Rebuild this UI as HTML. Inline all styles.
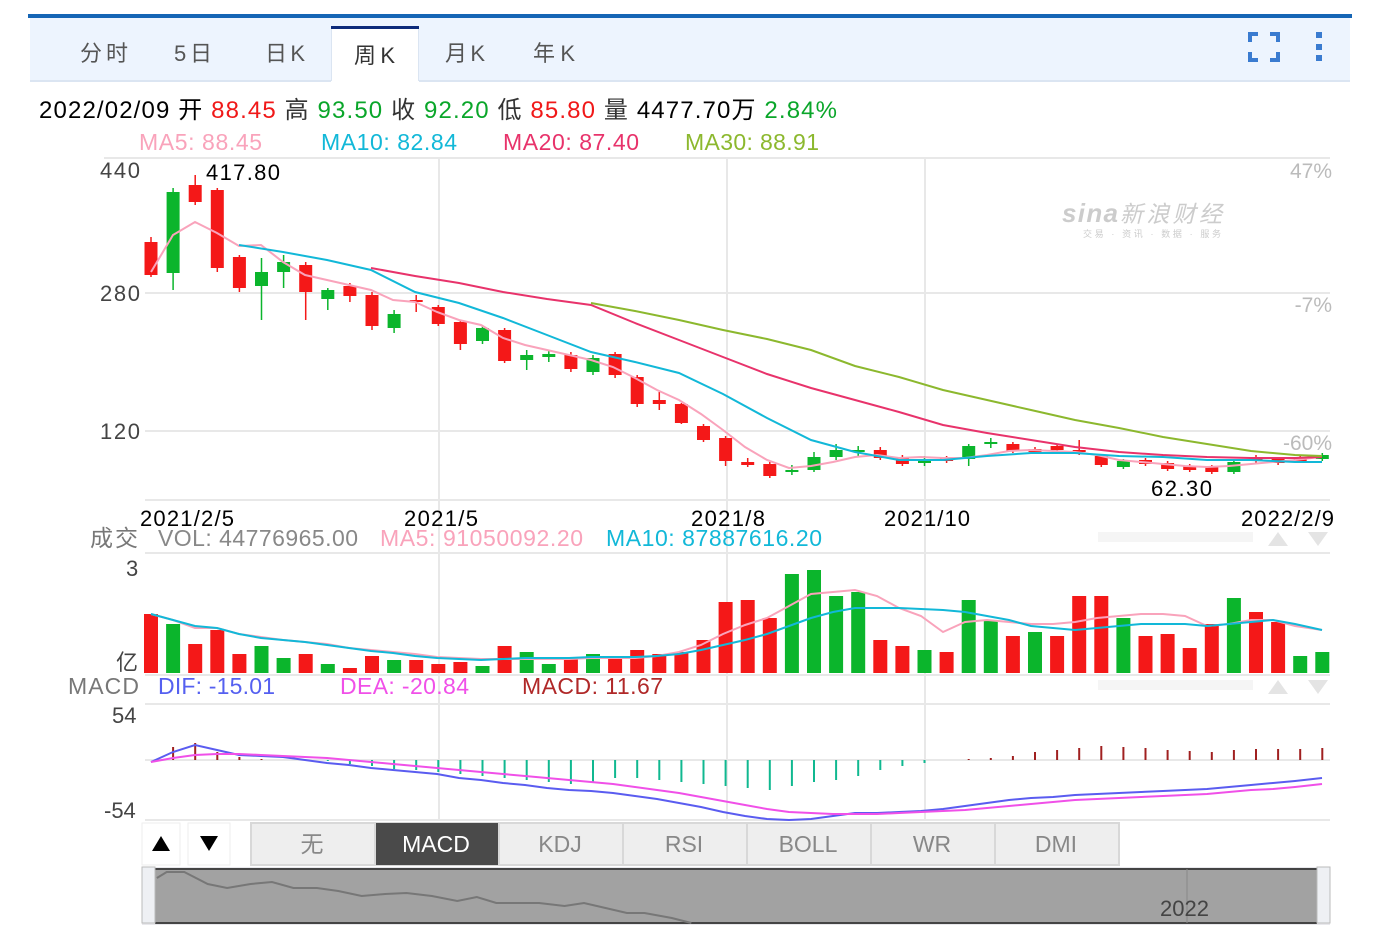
<!DOCTYPE html>
<html><head><meta charset="utf-8">
<style>
html,body{margin:0;padding:0;background:#fff;width:1374px;height:950px;overflow:hidden;font-family:"Liberation Sans","Noto Sans CJK SC",sans-serif;}
svg text{font-family:"Liberation Sans","Noto Sans CJK SC",sans-serif;}
</style></head><body>
<svg id="s" width="1374" height="950" xmlns="http://www.w3.org/2000/svg">
<rect x="28" y="14" width="1324" height="4" fill="#1565b5"/>
<rect x="30" y="18" width="1320" height="62" fill="#edf4fe"/>
<rect x="30" y="80" width="1320" height="2" fill="#dbe5f2"/>
<rect x="331" y="26" width="88" height="56" fill="#fff"/>
<rect x="331" y="26" width="88" height="3" fill="#0d2a7a"/>
<rect x="331" y="29" width="1" height="52" fill="#dbe5f2"/><rect x="418" y="29" width="1" height="52" fill="#dbe5f2"/>
<g font-size="22" fill="#555">
<text x="80" y="61" textLength="48">分时</text><text x="174" y="61" textLength="38">5日</text><text x="265" y="61" textLength="40">日K</text>
<text x="354" y="63" fill="#333" textLength="41">周K</text><text x="445" y="61" textLength="40">月K</text><text x="533" y="61" textLength="42">年K</text></g>
<g fill="#3a7bd0"><path d="M1248 32h10v4h-6v6h-4zM1270 32h10v10h-4v-6h-6zM1248 52h4v6h6v4h-10zM1276 52h4v10h-10v-4h6z"/>
<rect x="1316" y="32" width="6" height="6"/><rect x="1316" y="44" width="6" height="6"/><rect x="1316" y="55" width="6" height="6"/></g>
<text x="39" y="118" font-size="24" textLength="798" lengthAdjust="spacing"><tspan fill="#000">2022/02/09 开 </tspan><tspan fill="#f01818">88.45</tspan><tspan fill="#333"> 高 </tspan><tspan fill="#0aa62a">93.50</tspan><tspan fill="#333"> 收 </tspan><tspan fill="#0aa62a">92.20</tspan><tspan fill="#333"> 低 </tspan><tspan fill="#f01818">85.80</tspan><tspan fill="#333"> 量 </tspan><tspan fill="#000">4477.70万 </tspan><tspan fill="#0aa62a">2.84%</tspan></text>
<g font-size="23"><text x="139" y="150" fill="#f9a3bb" textLength="123">MA5: 88.45</text><text x="321" y="150" fill="#12b8d8" textLength="136">MA10: 82.84</text><text x="503" y="150" fill="#e8336b" textLength="136">MA20: 87.40</text><text x="685" y="150" fill="#8cb82e" textLength="134">MA30: 88.91</text></g>
<g stroke="#e8e8e8" stroke-width="2" fill="none">
<path d="M104 158H1330M145 293H1330M145 431H1330M145 500H1330M145 553H1330M145 675H1330M145 704H1330M145 760H1330M145 820H1330"/>
<path d="M439 158V820M727 158V820M925 158V820"/></g>
<g font-size="22" fill="#444"><text x="100" y="178" textLength="40">440</text><text x="100" y="301" textLength="40">280</text><text x="100" y="439" textLength="40">120</text></g>
<g font-size="21" fill="#bbb" text-anchor="end"><text x="1332" y="178">47%</text><text x="1332" y="312">-7%</text><text x="1332" y="450">-60%</text></g>
<text x="1062" y="222" font-size="26" font-style="italic" font-weight="bold" fill="#ccc" textLength="56">sina</text>
<text x="1120" y="222" font-size="23" font-style="italic" fill="#ccc" textLength="102">新浪财经</text>
<text x="1083" y="237" font-size="9" fill="#ccc" textLength="138">交易 · 资讯 · 数据 · 服务</text>
<g id="cand"></g>
<text x="206" y="180" font-size="22" fill="#000" textLength="74">417.80</text>
<text x="1151" y="496" font-size="22" fill="#000" textLength="61">62.30</text>
<g font-size="22" fill="#000"><text x="140" y="526" textLength="94">2021/2/5</text><text x="404" y="526" textLength="74">2021/5</text><text x="691" y="526" textLength="74">2021/8</text><text x="884" y="526" textLength="86">2021/10</text><text x="1241" y="526" textLength="93">2022/2/9</text></g>
<g font-size="23"><text x="90" y="546" fill="#777" textLength="48">成交</text><text x="158" y="546" fill="#888" textLength="200">VOL: 44776965.00</text><text x="380" y="546" fill="#f9a3bb" textLength="203">MA5: 91050092.20</text><text x="606" y="546" fill="#12b8d8" textLength="216">MA10: 87887616.20</text></g>
<g font-size="22" fill="#444"><text x="126" y="576">3</text><text x="116" y="670">亿</text><text x="112" y="723">54</text><text x="104" y="818">-54</text></g>
<g font-size="23"><text x="68" y="694" fill="#777" textLength="71">MACD</text><text x="158" y="694" fill="#5560f0" textLength="117">DIF: -15.01</text><text x="340" y="694" fill="#f050e8" textLength="129">DEA: -20.84</text><text x="522" y="694" fill="#b02828" textLength="141">MACD: 11.67</text></g>
<g fill="#eee"><path d="M1098 532h155v10h-155z" opacity=".6"/><path d="M1098 680h155v10h-155z" opacity=".6"/>
<path d="M1268 546l10-14 10 14zM1308 532l10 14 10-14zM1268 694l10-14 10 14zM1308 680l10 14 10-14z" fill="#e4e4e4"/></g>
<g id="vol"></g><g id="macd"></g>
<rect x="142" y="823" width="38" height="42" fill="#fff" stroke="#eee"/><rect x="188" y="823" width="42" height="42" fill="#fff" stroke="#eee"/>
<path d="M152 851l9-15 9 15z M200 836h18l-9 15z" fill="#000"/>
<g font-size="23" fill="#888" text-anchor="middle">
<rect x="251" y="823" width="868" height="42" fill="#eee" stroke="#d8d8d8" stroke-width="2"/>
<rect x="376" y="823" width="123" height="42" fill="#4a4a4a"/>
<path d="M375 823v42M499 823v42M623 823v42M747 823v42M871 823v42M995 823v42" stroke="#d8d8d8" stroke-width="2"/>
<text x="312" y="852">无</text><text x="436" y="852" fill="#fff">MACD</text><text x="560" y="852">KDJ</text><text x="684" y="852">RSI</text><text x="808" y="852">BOLL</text><text x="932" y="852">WR</text><text x="1056" y="852">DMI</text></g>
<rect x="142" y="867" width="1188" height="58" fill="#e8e8ec"/>
<rect x="155" y="869" width="1162" height="54" fill="#a2a2a2"/>
<path d="M155 869H1317M155 923H1317" stroke="#444" stroke-width="2"/>
<rect x="142" y="867" width="13" height="56" fill="#eef0f4" stroke="#bbb"/><rect x="1317" y="867" width="13" height="56" fill="#eef0f4" stroke="#bbb"/>
<path d="M1187 869V923" stroke="#888"/>
<polyline fill="none" stroke="#777" stroke-width="2" points="156,878 161,872 170,872 182,884 192,888 204,884 215,882 226,888 238,888 249,891 261,896 273,894 284,893 297,896 310,901 320,897 330,903 340,903 352,903 365,906 375,903 386,908 397,913 406,913 420,918 430,923"/>
<text x="1160" y="916" font-size="22" fill="#444">2022</text>
</svg>
<script>
const NS="http://www.w3.org/2000/svg";
function add(g,tag,a){const e=document.createElementNS(NS,tag);for(const k in a)e.setAttribute(k,a[k]);document.getElementById(g).appendChild(e);}
// rescale mini chart x
(function(){const p=document.querySelector('svg > polyline');const pts=p.getAttribute('points').trim().split(/\s+/).map(s=>{const [x,y]=s.split(',').map(Number);return (155+(x-155)*1.95).toFixed(1)+','+y;});p.setAttribute('points',pts.join(' '));})();
const R="#f41818",G="#0bb52c";
const c=[[R,242,275,237,277],[G,192,273,188,290],[R,185,202,175,205],[R,190,268,188,272],[R,257,288,255,292],[G,272,286,258,320],[G,262,272,255,288],[R,265,292,262,320],[G,290,299,288,310],[R,286,296,283,302],[R,295,326,292,330],[G,314,328,310,333],[R,300,302,295,312],[R,307,324,305,326],[R,322,344,320,350],[G,328,341,326,344],[R,330,361,328,363],[G,355,360,350,370],[G,354,357,350,362],[R,355,369,352,372],[G,358,372,355,375],[R,354,375,352,378],[R,377,404,375,407],[R,400,404,392,410],[R,404,423,403,424],[R,426,440,424,442],[R,438,461,436,466],[R,462,465,458,467],[R,464,476,462,478],[G,470,472,465,475],[G,457,470,452,472],[G,450,457,444,460],[G,450,452,446,456],[R,450,458,447,460],[R,457,464,455,466],[G,460,463,456,466],[R,458,461,456,463],[G,446,459,444,466],[G,442,444,438,448],[R,444,451,442,453],[R,449,452,447,454],[R,446,450,444,452],[R,450,452,440,455],[R,456,465,454,467],[G,461,467,459,469],[R,460,464,458,466],[R,463,469,461,471],[R,466,470,464,472],[R,467,472,465,474],[G,462,472,460,474],[R,457,461,455,463],[R,459,463,457,465],[R,458,461,456,463],[G,455,459,453,461]];
c.forEach((d,i)=>{const x=151+i*22.1;add("cand","rect",{x:x-0.75,y:d[3],width:1.5,height:d[4]-d[3],fill:d[0]});add("cand","rect",{x:x-6.5,y:d[1],width:13,height:Math.max(2,d[2]-d[1]),fill:d[0]});});
function pl(g,pts,col,w){add(g,"polyline",{points:pts,fill:"none",stroke:col,"stroke-width":w||2});}
pl("cand","151,272 173,235 195,222 217,233 239,246 261,245 283,262 305,275 327,280 349,285 371,290 393,300 415,302 437,312 459,320 481,325 503,338 525,345 547,350 569,355 591,360 613,367 635,378 657,390 679,400 701,414 723,430 745,447 767,460 789,468 811,466 833,462 855,457 877,455 899,458 921,457 943,458 965,458 987,455 1009,451 1031,450 1053,451 1075,452 1097,455 1119,460 1141,462 1163,464 1185,466 1207,467 1229,466 1251,464 1273,462 1295,460 1320,457","#f9a3bb");
pl("cand","239,245 283,252 327,260 371,270 415,292 459,303 503,318 547,335 591,352 635,362 679,373 723,394 767,418 811,440 855,452 899,460 943,460 987,456 1031,453 1075,453 1119,456 1163,457 1207,460 1251,460 1295,462 1322,462","#12b8d8");
pl("cand","371,268 415,276 459,283 503,292 547,299 591,305 635,323 679,340 723,357 767,374 811,388 855,400 899,412 943,425 987,433 1031,440 1075,447 1119,452 1163,455 1207,457 1251,458 1295,458 1322,457","#e8336b");
pl("cand","591,303 635,311 679,320 723,330 767,339 811,350 855,366 899,377 943,390 987,400 1031,410 1075,420 1119,428 1163,437 1207,444 1251,451 1295,455 1322,456","#8cb82e");
const v=[614,624,644,630,654,646,658,654,664,668,656,660,660,664,662,666,646,652,664,658,654,658,650,654,652,640,602,600,618,574,570,596,592,640,646,650,652,600,620,636,632,636,596,596,618,636,634,648,624,598,612,622,656,652];
c.forEach((d,i)=>{const x=151+i*22.1;let col=d[0];if([40,52,53].includes(i))col=G;add("vol","rect",{x:x-7,y:v[i],width:14,height:673-v[i],fill:col});});
pl("vol","151,614 173,620 195,628 217,628 239,634 261,637 283,640 305,642 327,644 349,648 371,650 393,652 415,654 437,657 459,658 481,659 503,659 525,659 547,659 569,659 591,658 613,658 635,658 657,656 679,652 701,645 723,634 745,625 767,618 789,606 811,594 833,592 855,590 877,596 899,608 921,616 943,632 965,622 987,620 1009,622 1031,624 1053,624 1075,622 1097,618 1119,616 1141,614 1163,614 1185,616 1207,626 1229,624 1251,620 1273,620 1295,626 1322,630","#f9a3bb");
pl("vol","151,614 173,620 195,626 217,628 239,634 261,638 283,640 305,642 327,645 349,648 371,651 393,653 415,656 437,658 459,659 481,660 503,659 525,658 547,658 569,658 591,657 613,657 635,657 657,656 679,654 701,650 723,645 745,640 767,634 789,626 811,618 833,612 855,608 877,608 899,608 921,609 943,610 965,612 987,616 1009,620 1031,626 1053,628 1075,630 1097,628 1119,626 1141,624 1163,624 1185,624 1207,626 1229,624 1251,622 1273,620 1295,624 1322,630","#12b8d8");
const m=[0,-13,-17,-8,-3,-1,0,0,1,4,6,9,10,12,14,16,18,20,22,24,22,18,18,20,22,24,26,28,30,26,22,20,16,10,6,3,0,-1,-2,-4,-8,-10,-12,-14,-13,-12,-10,-9,-8,-10,-11,-11,-11,-12];
m.forEach((h,i)=>{if(h===0)return;const x=151+i*22.1;add("macd","rect",{x:x-1,y:h<0?760+h:760,width:2,height:Math.abs(h),fill:h<0?"#a02020":"#10b890"});});
pl("macd","151,762 173,752 195,745 217,750 239,755 261,756 283,757 305,760 327,763 349,765 371,768 393,770 415,772 437,774 459,778 481,780 503,783 525,785 547,788 569,790 591,791 613,793 635,796 657,799 679,803 701,807 723,812 745,816 767,819 789,820 811,819 833,816 855,813 877,813 899,812 921,811 943,809 965,806 987,803 1009,800 1031,798 1053,797 1075,795 1097,794 1119,793 1141,792 1163,791 1185,790 1207,789 1229,787 1251,785 1273,783 1295,781 1322,778","#5a5cf0");
pl("macd","151,762 173,758 195,755 217,754 239,754 261,755 283,756 305,757 327,758 349,760 371,762 393,764 415,766 437,768 459,770 481,772 503,774 525,776 547,778 569,780 591,782 613,784 635,787 657,790 679,793 701,797 723,801 745,805 767,809 789,812 811,813 833,814 855,814 877,814 899,813 921,812 943,811 965,810 987,808 1009,806 1031,804 1053,802 1075,800 1097,799 1119,798 1141,797 1163,796 1185,795 1207,794 1229,792 1251,790 1273,789 1295,787 1322,784","#f050e8");
</script>
</body></html>
